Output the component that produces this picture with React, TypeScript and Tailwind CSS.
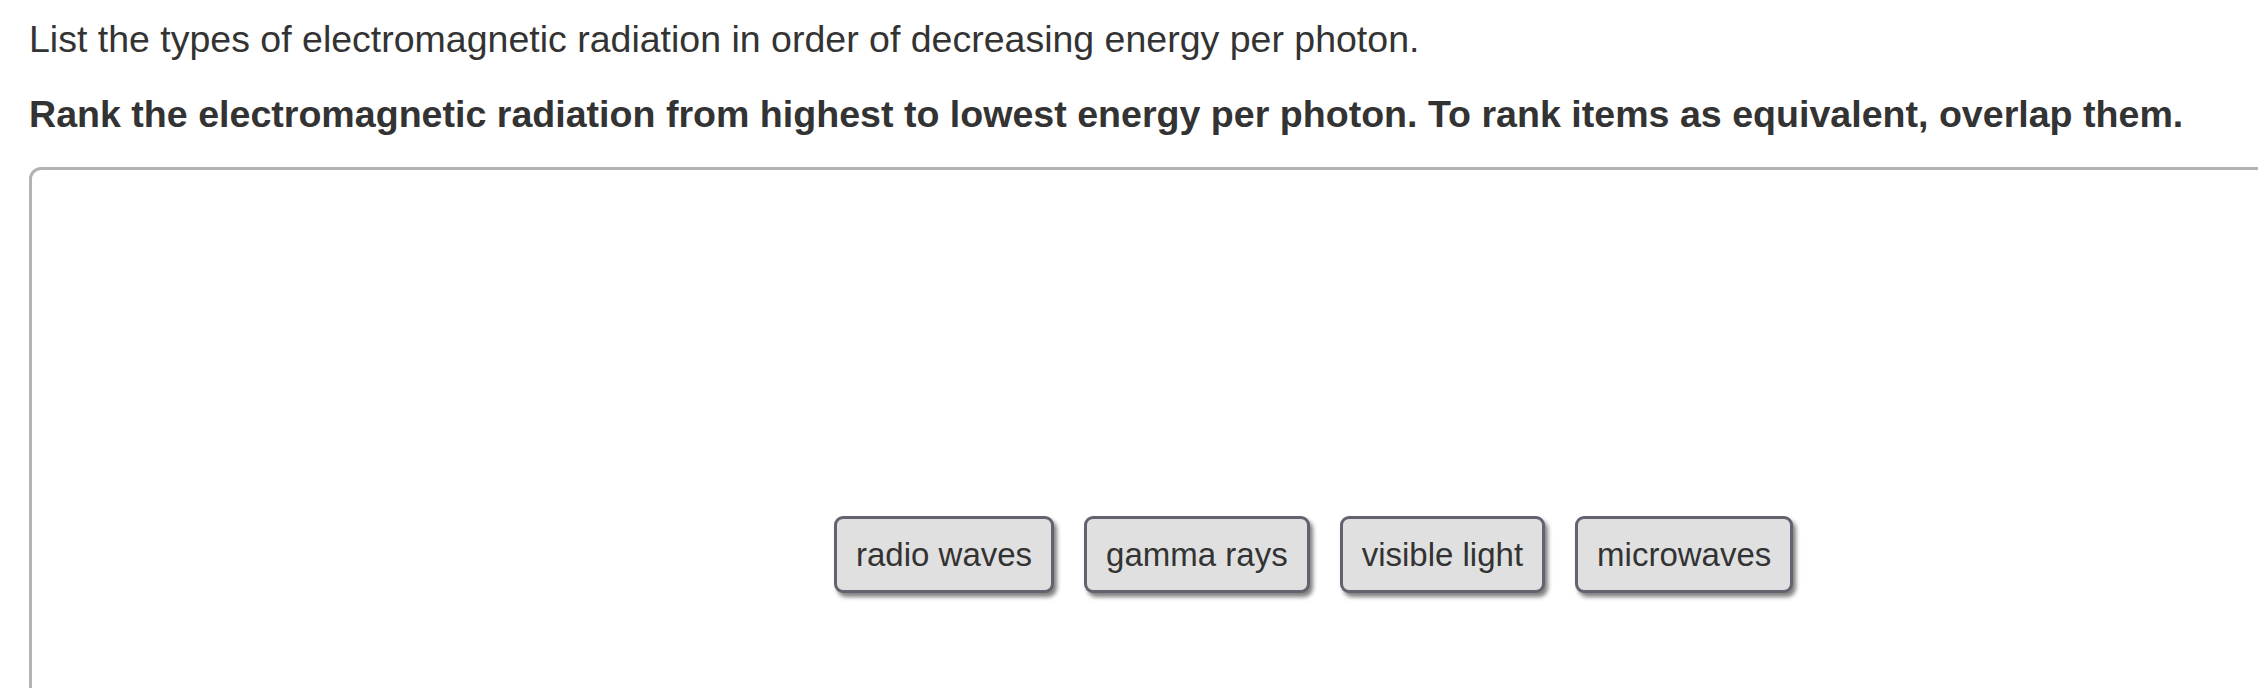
import React from "react";

const items = ["radio waves", "gamma rays", "visible light", "microwaves"];

export default function App() {
  return (
    <div
      className="w-[2258px] h-[688px] overflow-hidden bg-white text-[#333333] pl-[29px]"
      style={{ fontFamily: '"Liberation Sans", Arial, Helvetica, sans-serif' }}
    >
      <p className="pt-[17px] text-[37.5px] leading-[45px]">
        List the types of electromagnetic radiation in order of decreasing energy per photon.
      </p>
      <p className="mt-[30px] text-[37.6px] leading-[45px] font-bold">
        Rank the electromagnetic radiation from highest to lowest energy per photon. To rank items as equivalent, overlap them.
      </p>
      <div className="mt-[30px] w-[2400px] h-[600px] border-[3px] border-[#b3b3b3] rounded-tl-[12px] pl-[802px] pt-[346px]">
        <div className="flex gap-[30px]">
          {items.map((t) => (
            <div
              key={t}
              className="h-[77px] flex items-center px-[19px] bg-[#e0e0e0] border-[3px] border-[#63636f] rounded-[9px] shadow-[3px_4px_4px_rgba(0,0,0,0.5)] text-[33px] leading-none whitespace-nowrap"
            >
              {t}
            </div>
          ))}
        </div>
      </div>
    </div>
  );
}
